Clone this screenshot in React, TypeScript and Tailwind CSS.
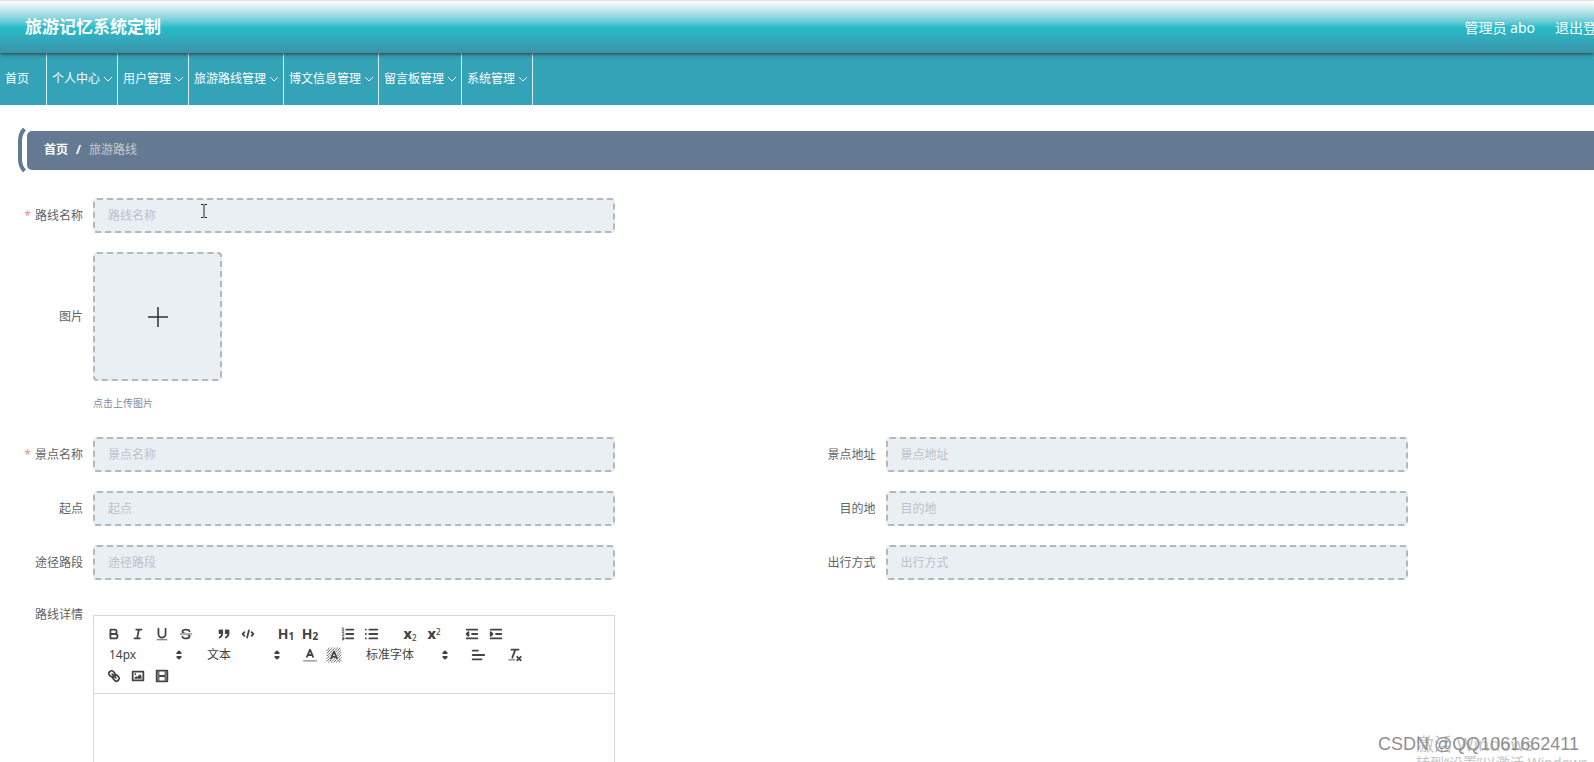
import React, { useState } from 'react'

interface MenuItem {
  label: string;
  hasChildren: boolean;
}

interface FieldProps {
  id: string;
  label: string;
  required?: boolean;
}

const menus: MenuItem[] = [
  { label: '个人中心', hasChildren: true },
  { label: '用户管理', hasChildren: true },
  { label: '旅游路线管理', hasChildren: true },
  { label: '博文信息管理', hasChildren: true },
  { label: '留言板管理', hasChildren: true },
  { label: '系统管理', hasChildren: true }
];

const Field: React.FC<FieldProps> = ({ id, label, required }) => {
  const [value, setValue] = useState('');
  return (
    <div className="flex items-center gap-[10px]">
      <label htmlFor={id} className="w-[83px] shrink-0 text-right text-[12px] text-[#606266]">
        {required && <span className="mr-[4px] text-[#f78989]">*</span>}
        {label}
      </label>
      <input
        id={id}
        type="text"
        value={value}
        placeholder={label}
        onChange={(e) => setValue(e.target.value)}
        className="h-[35px] w-[522px] rounded-[4px] border-2 border-dashed border-[#b5b7b9] bg-[#eaeff4] px-[13px] text-[12px] text-[#606266] outline-none placeholder:text-[#bcc1ca]"
      />
    </div>
  );
};

const ToolButton: React.FC<{ title: string; children: React.ReactNode }> = ({ title, children }) => (
  <button type="button" title={title} aria-label={title} className="flex h-[21px] w-[24px] items-center justify-center">
    {children}
  </button>
);

const Glyph: React.FC<{ children: React.ReactNode }> = ({ children }) => (
  <svg viewBox="0 0 18 18" className="size-4" fill="none" stroke="#444" strokeWidth="2" strokeLinecap="round" strokeLinejoin="round">
    {children}
  </svg>
);

const Picker: React.FC<{ label: string; options: string[]; width: string }> = ({ label, options, width }) => (
  <div className={`relative h-[21px] ${width}`}>
    <select aria-label={label} className="h-[21px] w-full appearance-none bg-transparent pl-[7px] text-[12px] leading-[21px] text-[#444] outline-none">
      {options.map((o) => (
        <option key={o}>{o}</option>
      ))}
    </select>
    <svg viewBox="0 0 18 18" className="pointer-events-none absolute right-0 top-[3px] size-4" fill="#444" stroke="#444" strokeWidth="2" strokeLinejoin="round">
      <polygon points="7 11 9 13 11 11 7 11" />
      <polygon points="7 7 9 5 11 7 7 7" />
    </svg>
  </div>
);

const Toolbar: React.FC = () => (
  <div className="border border-[#d5d7d9] py-[7px] pl-[8px]">
    <div className="flex gap-[14px]">
      <div className="flex">
        <ToolButton title="加粗">
          <Glyph>
            <path d="M5,4H9.5a2.5,2.5,0,0,1,0,5H5Z" />
            <path d="M5,9h5.5a2.5,2.5,0,0,1,0,5H5Z" />
          </Glyph>
        </ToolButton>
        <ToolButton title="斜体">
          <Glyph>
            <path d="M7 4H13M5 14H11M8 14L10 4" />
          </Glyph>
        </ToolButton>
        <ToolButton title="下划线">
          <Glyph>
            <path d="M5,3V9a4,4,0,0,0,8,0V3" />
            <path d="M3.5 15.5H14.5" strokeWidth="1" />
          </Glyph>
        </ToolButton>
        <ToolButton title="删除线">
          <Glyph>
            <path d="M13 6C12.6 4.8 11 4 9 4C6.8 4 5 5.1 5 6.5C5 8.2 6.6 8.7 9 9C11.5 9.3 13 9.8 13 11.5C13 12.9 11.2 14 9 14C7 14 5.4 13.2 5 12" />
            <path d="M1.5 9H16.5" stroke="#fff" strokeWidth="2" />
            <path d="M2.5 9H15.5" strokeWidth="1" />
          </Glyph>
        </ToolButton>
      </div>
      <div className="flex">
        <ToolButton title="引用">
          <Glyph>
            <path d="M4 5H7V8H4ZM11 5H14V8H11Z" fill="#444" />
            <path d="M7,8c0,4-3,5-3,5M14,8c0,4-3,5-3,5" />
          </Glyph>
        </ToolButton>
        <ToolButton title="代码块">
          <Glyph>
            <path d="M5 7L3 9L5 11M13 7L15 9L13 11M10 5L8 13" />
          </Glyph>
        </ToolButton>
      </div>
      <div className="flex font-bold text-[#444]">
        <ToolButton title="一级标题">
          <span className="text-[14px] leading-4">H</span>
          <span className="mt-1 text-[10px] leading-3">1</span>
        </ToolButton>
        <ToolButton title="二级标题">
          <span className="text-[14px] leading-4">H</span>
          <span className="mt-1 text-[10px] leading-3">2</span>
        </ToolButton>
      </div>
      <div className="flex">
        <ToolButton title="有序列表">
          <Glyph>
            <path d="M7 4H15M7 9H15M7 14H15" />
            <path d="M2.5 2.5L3.5 2V5.5M2.5 5.5H4.5M2.5 7.5H4.2V8.5L2.5 10.5H4.5M2.5 12.5H4.3V15.5H2.5M3 14H4.3" strokeWidth="1" />
          </Glyph>
        </ToolButton>
        <ToolButton title="无序列表">
          <Glyph>
            <path d="M6 4H15M6 9H15M6 14H15M2 4H2.1M2 9H2.1M2 14H2.1" />
          </Glyph>
        </ToolButton>
      </div>
      <div className="flex text-[#444]">
        <ToolButton title="下标">
          <span className="text-[14px] font-extrabold leading-4">x</span>
          <span className="mt-2 text-[8px] font-medium leading-3">2</span>
        </ToolButton>
        <ToolButton title="上标">
          <span className="text-[14px] font-extrabold leading-4">x</span>
          <span className="mb-1 text-[8px] font-medium leading-3">2</span>
        </ToolButton>
      </div>
      <div className="flex">
        <ToolButton title="减少缩进">
          <Glyph>
            <path d="M3 4H15M9 9H15M3 14H15" />
            <path d="M5 7V11L3 9Z" fill="#444" />
          </Glyph>
        </ToolButton>
        <ToolButton title="增加缩进">
          <Glyph>
            <path d="M3 4H15M9 9H15M3 14H15" />
            <path d="M3 7V11L5 9Z" fill="#444" />
          </Glyph>
        </ToolButton>
      </div>
    </div>

    <div className="flex gap-[13px]">
      <Picker label="字号" options={['14px', '16px', '18px']} width="w-[85px]" />
      <Picker label="段落" options={['文本', '标题1', '标题2']} width="w-[85px]" />
      <div className="flex">
        <ToolButton title="文字颜色">
          <Glyph>
            <path d="M5.5 11L9 3L12.5 11M6.4 9H11.6" />
            <path d="M2 15.5H16" stroke="#aaa" />
          </Glyph>
        </ToolButton>
        <ToolButton title="背景颜色">
          <Glyph>
            <path d="M1 4L4 1M1 7L7 1M1 10L10 1M1 13L13 1M1 16L16 1M3 17L17 3M6 17L17 6M9 17L17 9M12 17L17 12M15 17L17 15" strokeWidth="1" strokeDasharray="1 1" />
            <path d="M5.5 13L9 5L12.5 13M6.4 11H11.6" stroke="#fff" strokeWidth="3" />
            <path d="M5.5 13L9 5L12.5 13M6.4 11H11.6" />
          </Glyph>
        </ToolButton>
      </div>
      <Picker label="字体" options={['标准字体', '衬线字体', '等宽字体']} width="w-[94px]" />
      <ToolButton title="对齐">
        <Glyph>
          <path d="M3 4H9M3 9H16M3 14H13" />
        </Glyph>
      </ToolButton>
      <ToolButton title="清除格式">
        <Glyph>
          <path d="M5 3H13M6 12L9.35 3M11.5 11L15.5 15M15.5 11L11.5 15" />
          <path d="M2 14.5H8.5" strokeWidth="1" />
        </Glyph>
      </ToolButton>
    </div>

    <div className="flex">
      <ToolButton title="链接">
        <Glyph>
          <path d="M7 7L11 11" />
          <path d="M8.9,4.577a3.476,3.476,0,0,1,.36,4.679A3.476,3.476,0,0,1,4.577,8.9C3.185,7.5,2.035,6.4,4.217,4.217S7.5,3.185,8.9,4.577Z" />
          <path d="M13.423,9.1a3.476,3.476,0,0,0-4.679-.36,3.476,3.476,0,0,0,.36,4.679c1.392,1.392,2.5,2.542,4.679.36S14.815,10.5,13.423,9.1Z" />
        </Glyph>
      </ToolButton>
      <ToolButton title="图片">
        <Glyph>
          <rect x="3" y="4" width="12" height="10" />
          <circle cx="6" cy="7" r="1" fill="#444" stroke="none" />
          <path d="M5 12V11L7 9L8 10L11 7L13 9V12Z" fill="#444" stroke="none" />
        </Glyph>
      </ToolButton>
      <ToolButton title="视频">
        <Glyph>
          <rect x="3" y="3" width="12" height="12" />
          <path d="M5.5 3V15M12.5 3V15M3 5.5H5M3 7.5H5M3 10.5H5M3 12.5H5M13 5.5H15M13 7.5H15M13 10.5H15M13 12.5H15" strokeWidth="1" />
          <path d="M6 9H12" />
        </Glyph>
      </ToolButton>
    </div>
  </div>
);

const App: React.FC = () => {
  return (
    <div className="relative h-screen overflow-hidden bg-white font-['Noto_Sans','Noto_Sans_CJK_SC',sans-serif] text-[12px]">
      {/* Header */}
      <header className="relative z-10 flex h-[53px] items-center justify-between whitespace-nowrap border-t border-[#dfe3e6] bg-linear-to-b from-white via-[#25bdc9] to-[#3a93a9] pl-[25px] text-white shadow-[0_1px_4px_#333]">
        <h1 className="text-[17px] font-bold">旅游记忆系统定制</h1>
        <div className="-mr-[17px] flex gap-5 text-[14px]">
          <span>管理员 abo</span>
          <a href="#logout">退出登录</a>
        </div>
      </header>

      {/* Main menu */}
      <nav className="flex h-[52px] bg-[#34a3b8] text-white">
        <a href="#home" className="flex w-[47px] items-center border-r border-[#d5edf2] pl-[5px]">首页</a>
        {menus.map((menu) => (
          <button key={menu.label} type="button" className="flex items-center gap-[3px] border-r border-[#d5edf2] pl-[5px] pr-[4px]">
            {menu.label}
            {menu.hasChildren && (
              <svg viewBox="0 0 10 10" className="size-[10px]" fill="none" stroke="currentColor" strokeWidth="1">
                <path d="M1 3L5 7L9 3" />
              </svg>
            )}
          </button>
        ))}
      </nav>

      {/* Breadcrumb */}
      <div className="mt-[23px] flex items-center pl-[17px]">
        <svg viewBox="0 0 10 44" className="h-[44px] w-[10px]" fill="none" stroke="#647a92" strokeWidth="4">
          <path d="M7.5 1C4 4.500 3 8 3 13V31C3 36 4 39.500 7.500 43" />
        </svg>
        <div className="flex h-[39px] flex-1 items-center rounded-l-[5px] bg-[#647a92] pl-[17px]">
          <a href="#home" className="font-bold text-white">首页</a>
          <span className="mx-[8px] font-bold text-white">/</span>
          <span className="text-[#c8ccd4]">旅游路线</span>
        </div>
      </div>

      {/* Route form */}
      <form className="flex flex-col gap-[19px] pr-[9px] pt-[26px]">
        <Field id="routeName" label="路线名称" required />

        <div>
          <div className="flex items-center gap-[10px]">
            <label htmlFor="picture" className="w-[83px] shrink-0 text-right text-[#606266]">图片</label>
            <label className="flex size-[129px] cursor-pointer items-center justify-center rounded-[4px] border-2 border-dashed border-[#b5b7b9] bg-[#eaeff4]">
              <input id="picture" type="file" className="sr-only" />
              <svg viewBox="0 0 20 20" className="size-5" stroke="#303133" strokeWidth="1.500">
                <path d="M10 0V20M0 10H20" />
              </svg>
            </label>
          </div>
          <p className="ml-[93px] mt-[12px] text-[10px] leading-[20px] text-[#7f8b9d]">点击上传图片</p>
        </div>

        <div className="mt-[5px] grid grid-cols-2 gap-y-[19px]">
          <Field id="spotName" label="景点名称" required />
          <Field id="spotAddress" label="景点地址" />
          <Field id="origin" label="起点" />
          <Field id="destination" label="目的地" />
          <Field id="via" label="途径路段" />
          <Field id="transport" label="出行方式" />
        </div>

        <div className="mt-[6px] flex items-start gap-[10px]">
          <label htmlFor="detail" className="w-[83px] shrink-0 text-right leading-[20px] text-[#606266]">路线详情</label>
          <div className="mt-[10px] w-[522px]">
            <Toolbar />
            <textarea id="detail" className="block h-[200px] w-full resize-none border border-t-0 border-[#d5d7d9] p-3 outline-none" />
          </div>
        </div>
      </form>

      {/* Text cursor */}
      <svg viewBox="0 0 8 16" className="pointer-events-none absolute left-[200px] top-[203px] h-4 w-2" fill="none" stroke="#222" strokeWidth="1">
        <path d="M1 1.500H3.500M4.500 1.500H7M4 2V14M1 14.500H3.500M4.500 14.500H7" />
      </svg>

      {/* Watermarks */}
      <div className="pointer-events-none absolute -bottom-[10px] right-0 w-[178px] whitespace-nowrap text-[#c4c4c4]">
        <p className="text-[18px] leading-[20px]">激活 Windows</p>
        <p className="text-[14px] leading-[18px]">转到“设置”以激活 Windows。</p>
      </div>
      <p className="pointer-events-none absolute bottom-[8px] right-[15px] font-['Liberation_Sans',sans-serif] text-[18px] leading-[20px] text-[#8f8f8f]">
        CSDN @QQ1061662411
      </p>
    </div>
  );
};

export default App;
